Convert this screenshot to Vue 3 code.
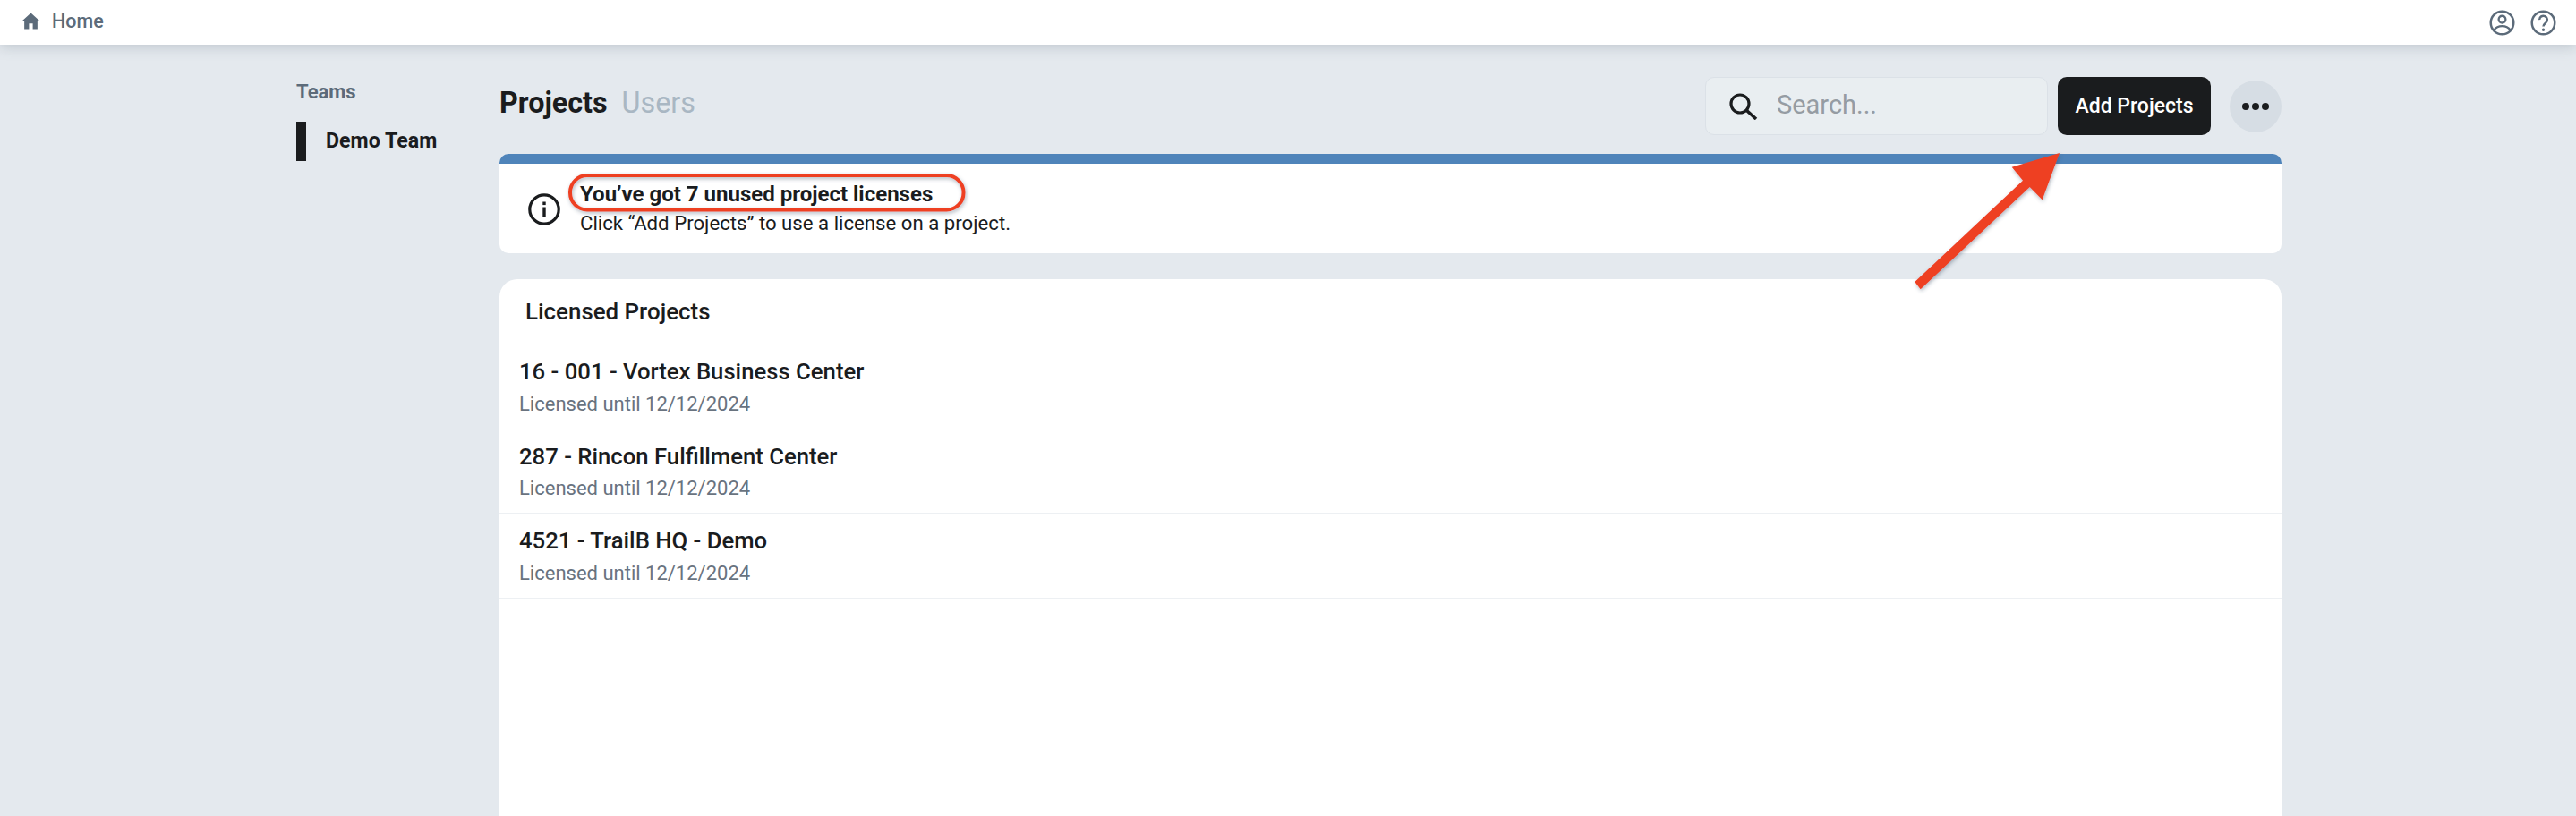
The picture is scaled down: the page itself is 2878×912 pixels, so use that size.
<script setup>
const projects = [
  { name: '16 - 001 - Vortex Business Center', until: 'Licensed until 12/12/2024' },
  { name: '287 - Rincon Fulfillment Center', until: 'Licensed until 12/12/2024' },
  { name: '4521 - TrailB HQ - Demo', until: 'Licensed until 12/12/2024' },
]
</script>

<template>
  <div class="page">
    <header class="topbar">
      <div class="crumb">
        <svg class="home" viewBox="2 3 20 17" aria-hidden="true"><path d="M10 20v-6h4v6h5v-8h3L12 3 2 12h3v8z" fill="currentColor" /></svg>
        <span class="crumb-label">Home</span>
      </div>
      <div class="top-icons">
        <svg viewBox="0 0 30 30" aria-hidden="true">
          <circle cx="15" cy="15" r="13.2" fill="none" stroke="currentColor" stroke-width="2.6" />
          <circle cx="15" cy="11" r="4" fill="none" stroke="currentColor" stroke-width="2.4" />
          <path d="M5.5 23.5C8 20 11 18.8 15 18.8s7 1.2 9.500 4.700" fill="none" stroke="currentColor" stroke-width="2.4" />
        </svg>
        <svg viewBox="0 0 30 30" aria-hidden="true">
          <circle cx="15" cy="15" r="13.2" fill="none" stroke="currentColor" stroke-width="2.6" />
          <path d="M10.500 11.500a4.500 4.500 0 1 1 7.400 3.400c-1.700 1.400-2.900 2.200-2.900 4.300" fill="none" stroke="currentColor" stroke-width="2.600" />
          <circle cx="15" cy="23" r="1.700" fill="currentColor" />
        </svg>
      </div>
    </header>

    <div class="layout">
      <aside class="sidebar">
        <div class="side-title">Teams</div>
        <div class="team"><span class="team-bar"></span><span class="team-name">Demo Team</span></div>
      </aside>

      <main class="main">
        <div class="toolbar">
          <div class="tabs">
            <span class="tab active">Projects</span>
            <span class="tab">Users</span>
          </div>
          <div class="search">
            <svg viewBox="0 0 33 30" aria-hidden="true">
              <circle cx="13" cy="12" r="10" fill="none" stroke="currentColor" stroke-width="3.200" />
              <path d="M20.500 19.500 31 29" fill="none" stroke="currentColor" stroke-width="3.600" />
            </svg>
            <span class="placeholder">Search...</span>
          </div>
          <button class="add">Add Projects</button>
          <button class="more" aria-label="More"><i></i><i></i><i></i></button>
        </div>

        <section class="notice">
          <svg class="info" viewBox="0 0 36 36" aria-hidden="true">
            <circle cx="18" cy="18" r="16.200" fill="none" stroke="currentColor" stroke-width="3.200" />
            <rect x="16.300" y="15.500" width="3.400" height="11" fill="currentColor" />
            <rect x="16.300" y="9.500" width="3.400" height="3.600" fill="currentColor" />
          </svg>
          <div>
            <div class="notice-title">You’ve got 7 unused project licenses</div>
            <div class="notice-sub">Click “Add Projects” to use a license on a project.</div>
          </div>
        </section>

        <section class="list">
          <h2 class="list-title">Licensed Projects</h2>
          <div v-for="p in projects" :key="p.name" class="row">
            <div class="row-name">{{ p.name }}</div>
            <div class="row-sub">{{ p.until }}</div>
          </div>
        </section>
      </main>
    </div>

    <svg class="annotations" viewBox="0 0 2878 912" aria-hidden="true">
      <defs>
        <filter id="soft" x="-10%" y="-10%" width="125%" height="130%">
          <feDropShadow dx="1" dy="2" stdDeviation="2" flood-color="#34495e" flood-opacity="0.4" />
        </filter>
      </defs>
      <rect x="637" y="196" width="439.500" height="38.500" rx="19" fill="none" stroke="#ee4023" stroke-width="4" filter="url(#soft)" />
      <path d="M2301 171 2247.700 186.700 2260 201.700 2139.300 315 2145.700 323.300 2267.700 209 2281.700 223.300z" fill="#ee4023" filter="url(#soft)" />
    </svg>
  </div>
</template>

<style>
html, body { margin: 0; background: #e4e9ee; }
</style>

<style scoped>
.page {
  position: relative;
  height: 912px;
  overflow: hidden;
  background: #e4e9ee;
  font-family: Roboto, "Liberation Sans", sans-serif;
  color: #1a1c1e;
}
.topbar {
  height: 50px;
  background: #fff;
  box-shadow: 0 2px 14px rgba(90, 105, 120, 0.28);
  display: flex;
  align-items: center;
  justify-content: space-between;
  padding: 0 22px 0 24px;
  color: #5c6b7a;
  position: relative;
}
.crumb { display: flex; align-items: center; gap: 13px; font-size: 21.500px; font-weight: 500; }
.crumb-label { margin-top: -3px; }
.home { width: 21px; height: 19px; margin-top: -4px; }
.top-icons { display: flex; gap: 17px; }
.top-icons svg { width: 29px; height: 29px; display: block; }
.layout {
  display: grid;
  grid-template-columns: 227px 1991px;
  padding: 36px 0 0 331px;
}
.side-title { font-size: 22px; font-weight: 700; color: #5c6b7a; line-height: 24px; margin-top: 5px; }
.team {
  display: flex;
  align-items: center;
  gap: 22px;
  height: 44px;
  margin-top: 21px;
  font-size: 23.200px;
  font-weight: 700;
}
.team-name { padding-bottom: 3px; }
.team-bar { width: 11px; height: 44px; background: #1a1c1e; }
.toolbar { display: flex; align-items: center; height: 65px; }
.tabs { flex: 1; display: flex; gap: 16px; font-size: 32.300px; align-self: flex-start; line-height: 38px; margin-top: 10px; }
.tab { color: #a9b7c3; }
.tab.active { color: #1a1c1e; font-weight: 700; }
.search {
  box-sizing: border-box;
  width: 383px;
  height: 65px;
  border: 1px solid #dbe1e7;
  border-radius: 10px;
  background: #e9eef1;
  display: flex;
  align-items: center;
  gap: 21px;
  padding-left: 25px;
  font-size: 29px;
  color: #959ca3;
}
.search svg { width: 33px; height: 30px; color: #1a1c1e; flex: none; }
.placeholder { margin-top: -3px; }
.add {
  width: 171px;
  height: 65px;
  margin-left: 11px;
  border: 0;
  border-radius: 10px;
  background: #1a1c1e;
  color: #fff;
  font: 500 23px Roboto, sans-serif;
}
.more {
  width: 58px;
  height: 58px;
  margin-left: 21px;
  padding: 0;
  border: 0;
  border-radius: 50%;
  background: #d6dde4;
  display: flex;
  align-items: center;
  justify-content: center;
  gap: 3px;
}
.more i { width: 8px; height: 8px; border-radius: 50%; background: #1a1c1e; }
.notice {
  box-sizing: border-box;
  height: 111px;
  margin-top: 21px;
  border-top: 11px solid #4f84ba;
  border-radius: 10px;
  background: #fff;
  display: flex;
  align-items: center;
  gap: 22px;
  padding-left: 32px;
}
.info { width: 36px; height: 36px; flex: none; margin-top: 1px; }
.notice-title { font-size: 24px; font-weight: 700; line-height: 29px; }
.notice-sub { font-size: 22.200px; line-height: 27px; margin-top: 4px; }
.list {
  height: 700px;
  margin-top: 29px;
  border-radius: 20px 20px 0 0;
  background: #fff;
}
.list-title {
  box-sizing: border-box;
  height: 73px;
  margin: 0;
  padding: 0 29px;
  border-bottom: 1px solid #edf0f3;
  font-size: 25.900px;
  font-weight: 500;
  line-height: 72px;
}
.row {
  box-sizing: border-box;
  height: 94.500px;
  padding: 13px 22px 0;
  border-bottom: 1px solid #edf0f3;
}
.row-name { font-size: 25.700px; font-weight: 500; line-height: 34px; }
.row-sub { font-size: 22px; line-height: 28px; margin-top: 5.500px; color: #69737f; }
.annotations { position: absolute; inset: 0; width: 2878px; height: 912px; pointer-events: none; }
</style>
